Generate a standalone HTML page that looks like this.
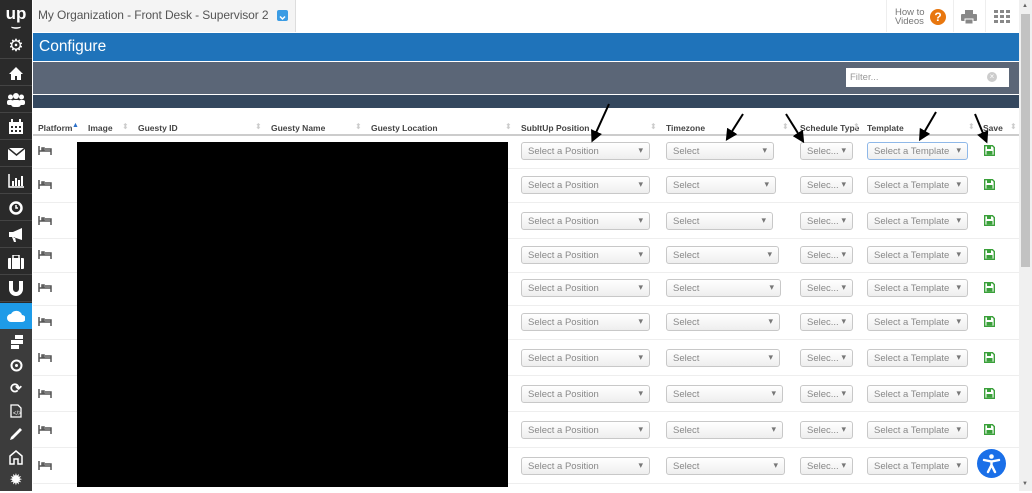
<!DOCTYPE html>
<html><head><meta charset="utf-8"><style>
*{margin:0;padding:0;box-sizing:border-box}
body{width:1032px;height:491px;overflow:hidden;background:#fff;font-family:"Liberation Sans",Arial,sans-serif;position:relative}
.a{position:absolute}
#side{left:0;top:0;width:32px;height:491px;background:#2a2a2a}
.ic{position:absolute;left:0;width:32px;height:26px;display:flex;align-items:center;justify-content:center;color:#fff;border-bottom:1px solid #444}
.sel{position:absolute;height:18px;border:1px solid #c8c8c8;border-radius:3px;background:linear-gradient(#fff,#eee);font-size:9.5px;color:#888;padding:3px 0 0 6px;white-space:nowrap;overflow:hidden}
.sel:after{content:"▾";position:absolute;right:6px;top:2px;font-size:9px;color:#777}
.th{position:absolute;top:123px;font-size:8.5px;font-weight:bold;color:#444;white-space:nowrap}
.sort{position:absolute;top:122px;font-size:8px;color:#ccc}
</style></head><body>
<div id="side" class="a">
 <div class="ic" style="top:0;height:33px;font-weight:bold;font-size:17px;flex-direction:column;line-height:14px;border:none">up<span style="font-size:10px;line-height:6px">‿</span></div>
 <div class="ic" style="top:33px;font-size:17px">⚙</div>
 <div class="ic" style="top:60px"><svg width="16" height="14"><path d="M1 8L8 1 15 8H13V14H9V10H7V14H3V8Z" fill="#fff"/></svg></div>
 <div class="ic" style="top:87px"><svg width="18" height="15"><circle cx="9" cy="4" r="3" fill="#fff"/><circle cx="3.5" cy="5" r="2.5" fill="#fff"/><circle cx="14.5" cy="5" r="2.5" fill="#fff"/><rect x="4" y="8" width="10" height="7" rx="3" fill="#fff"/><rect x="0" y="8" width="6" height="5" rx="2" fill="#fff"/><rect x="12" y="8" width="6" height="5" rx="2" fill="#fff"/></svg></div>
 <div class="ic" style="top:114px"><svg width="16" height="16"><rect x="1" y="3" width="14" height="12" fill="#fff"/><g fill="#2a2a2a"><rect x="3" y="7" width="2" height="2"/><rect x="7" y="7" width="2" height="2"/><rect x="11" y="7" width="2" height="2"/><rect x="3" y="11" width="2" height="2"/><rect x="7" y="11" width="2" height="2"/><rect x="11" y="11" width="2" height="2"/></g><rect x="3" y="0" width="2" height="4" fill="#fff"/><rect x="11" y="0" width="2" height="4" fill="#fff"/></svg></div>
 <div class="ic" style="top:141px"><svg width="17" height="12"><rect width="17" height="12" fill="#fff"/><path d="M0 0L8.5 7 17 0" stroke="#2a2a2a" fill="none" stroke-width="1.5"/></svg></div>
 <div class="ic" style="top:168px"><svg width="16" height="14"><path d="M1 0V13H16" stroke="#fff" fill="none" stroke-width="1.5"/><rect x="4" y="7" width="2" height="5" fill="#fff"/><rect x="7" y="4" width="2" height="8" fill="#fff"/><rect x="10" y="6" width="2" height="6" fill="#fff"/><rect x="13" y="2" width="2" height="10" fill="#fff"/></svg></div>
 <div class="ic" style="top:195px"><svg width="14" height="14"><circle cx="7" cy="7" r="5.5" stroke="#fff" stroke-width="2.5" fill="none"/><path d="M7 4V7H9" stroke="#fff" stroke-width="1.5" fill="none"/></svg></div>
 <div class="ic" style="top:222px"><svg width="16" height="14"><path d="M1 4H5L14 0V12L5 9H1Z M4 9L6 14H8L7 9" fill="#fff"/></svg></div>
 <div class="ic" style="top:249px"><svg width="16" height="14"><rect x="0" y="3" width="16" height="11" rx="1" fill="#fff"/><rect x="5" y="0" width="6" height="4" stroke="#fff" fill="none" stroke-width="1.5"/><rect x="3" y="3" width="1" height="11" fill="#2a2a2a"/><rect x="12" y="3" width="1" height="11" fill="#2a2a2a"/></svg></div>
 <div class="ic" style="top:276px"><svg width="14" height="15"><path d="M2 0V8A5 5 0 0 0 12 8V0" stroke="#fff" stroke-width="4" fill="none"/></svg></div>
 <div class="ic" style="top:303px;background:#1e9be8;border:none"><svg width="18" height="12"><path d="M4 12A4 4 0 0 1 4 4A6 6 0 0 1 15 5A3.5 3.5 0 0 1 15 12Z" fill="#fff"/></svg></div>
 <div class="a" style="left:0;top:329px;width:32px;height:162px;background:#3c3c3c"></div>
 <div class="ic" style="top:329px;border:none"><svg width="14" height="14"><g fill="#fff"><rect x="6" y="0" width="4" height="4"/><rect x="10" y="0" width="4" height="4"/><rect x="2" y="5" width="4" height="4"/><rect x="6" y="5" width="4" height="4"/><rect x="10" y="5" width="4" height="4"/><rect x="2" y="10" width="4" height="4"/><rect x="6" y="10" width="4" height="4"/></g></svg></div>
 <div class="ic" style="top:352px;border:none"><svg width="13" height="13"><circle cx="6.5" cy="6.5" r="5" stroke="#fff" stroke-width="2" fill="none"/><circle cx="6.5" cy="6.5" r="1.5" fill="#fff"/></svg></div>
 <div class="ic" style="top:375px;border:none;font-size:14px;font-weight:bold">⟳</div>
 <div class="ic" style="top:398px;border:none"><svg width="12" height="14"><path d="M1 1H8L11 4V13H1Z" stroke="#fff" fill="none" stroke-width="1.3"/><text x="3" y="11" font-size="6" fill="#fff">&lt;/&gt;</text></svg></div>
 <div class="ic" style="top:421px;border:none"><svg width="14" height="14"><path d="M1 13L2 10 9 3 11 5 4 12Z M9 3L11 1 13 3 11 5" fill="#fff"/></svg></div>
 <div class="ic" style="top:444px;border:none"><svg width="14" height="15"><path d="M1 14V6L7 1 13 6V14H9V9H5V14Z" stroke="#fff" fill="none" stroke-width="1.5"/></svg></div>
 <div class="ic" style="top:467px;border:none;font-size:16px">✹</div>
</div>
<!-- top bar -->
<div class="a" style="left:33px;top:0;width:263px;height:32px;background:#f4f4f4;border-right:1px solid #ddd"></div>
<div class="a" style="left:38px;top:8px;font-size:12px;color:#555;white-space:nowrap;letter-spacing:-0.1px">My Organization - Front Desk - Supervisor 2</div>
<div class="a" style="left:277px;top:10px;width:11px;height:11px;background:#3b9ce4;border-radius:2px"><svg width="11" height="11"><path d="M3 4.5L5.5 7 8 4.5" stroke="#fff" stroke-width="1.5" fill="none"/></svg></div>
<div class="a" style="left:886px;top:0;width:1px;height:32px;background:#eee"></div>
<div class="a" style="left:953px;top:0;width:1px;height:32px;background:#eee"></div>
<div class="a" style="left:985px;top:0;width:1px;height:32px;background:#eee"></div>
<div class="a" style="left:895px;top:8px;font-size:9.5px;color:#777;line-height:9px">How to<br>Videos</div>
<div class="a" style="left:930px;top:9px;width:16px;height:16px;border-radius:50%;background:#e8770f;color:#fff;font-weight:bold;font-size:12px;text-align:center;line-height:16px">?</div>
<svg class="a" style="left:961px;top:10px" width="16" height="14"><rect x="4" y="0" width="8" height="4" fill="#888"/><rect x="0" y="4" width="16" height="7" rx="1" fill="#888"/><rect x="4" y="9" width="8" height="5" fill="#888" stroke="#fff" stroke-width="1"/></svg>
<svg class="a" style="left:994px;top:10px" width="17" height="13"><g fill="#888"><rect x="0" y="0" width="4" height="3"/><rect x="6" y="0" width="4" height="3"/><rect x="12" y="0" width="4" height="3"/><rect x="0" y="5" width="4" height="3"/><rect x="6" y="5" width="4" height="3"/><rect x="12" y="5" width="4" height="3"/><rect x="0" y="10" width="4" height="3"/><rect x="6" y="10" width="4" height="3"/><rect x="12" y="10" width="4" height="3"/></g></svg>
<!-- scrollbar -->
<div class="a" style="left:1019px;top:0;width:13px;height:491px;background:#f0f0f0"></div>
<div class="a" style="left:1021px;top:14px;width:9px;height:253px;background:#c2c2c2"></div>
<div class="a" style="left:1022px;top:3px;font-size:6px;color:#666">▲</div>
<div class="a" style="left:1022px;top:481px;font-size:6px;color:#666">▼</div>
<!-- bars -->
<div class="a" style="left:33px;top:33px;width:986px;height:28px;background:#1f73ba;color:#fff;font-size:15.5px;padding:5px 0 0 6px">Configure</div>
<div class="a" style="left:33px;top:62px;width:986px;height:32px;background:#5b6677"></div>
<div class="a" style="left:846px;top:68px;width:163px;height:19px;background:#fff;font-size:9.5px;color:#999;padding:4px 0 0 4px">Filter...</div>
<div class="a" style="left:987px;top:72px;width:10px;height:10px;border-radius:50%;background:#ccc;color:#fff;font-size:8px;line-height:10px;text-align:center">×</div>
<div class="a" style="left:33px;top:95px;width:986px;height:13px;background:#34475e"></div>
<!-- header -->
<div class="th" style="left:38px">Platform</div><div class="a" style="left:72px;top:122px;font-size:7px;color:#2a6fc9">▲</div>
<div class="th" style="left:88px">Image</div><div class="sort" style="left:122px">⬍</div>
<div class="th" style="left:138px">Guesty ID</div><div class="sort" style="left:255px">⬍</div>
<div class="th" style="left:271px">Guesty Name</div><div class="sort" style="left:355px">⬍</div>
<div class="th" style="left:371px">Guesty Location</div><div class="sort" style="left:505px">⬍</div>
<div class="th" style="left:521px">SubItUp Position</div><div class="sort" style="left:650px">⬍</div>
<div class="th" style="left:666px">Timezone</div><div class="sort" style="left:782px">⬍</div>
<div class="th" style="left:800px">Schedule Type</div><div class="sort" style="left:853px">⬍</div>
<div class="th" style="left:867px">Template</div><div class="sort" style="left:968px">⬍</div>
<div class="th" style="left:983px">Save</div><div class="sort" style="left:1010px">⬍</div>
<div class="a" style="left:33px;top:134px;width:986px;height:2px;background:#ccc"></div>
<div id="rows"></div>
<div class="a" style="left:77px;top:142px;width:431px;height:345px;background:#000"></div>
<svg class="a" style="left:0;top:0" width="1032" height="491">
<defs><marker id="m" markerWidth="6" markerHeight="6" refX="3" refY="3" orient="auto"><path d="M0 0L6 3 0 6Z" fill="#000"/></marker></defs>
<g stroke="#000" stroke-width="2" marker-end="url(#m)">
<line x1="609" y1="104" x2="594" y2="137"/><line x1="743" y1="114" x2="729" y2="136"/><line x1="786" y1="114" x2="801" y2="138"/><line x1="936" y1="112" x2="922" y2="136"/><line x1="975" y1="114" x2="985" y2="138"/></g></svg>
<div class="a" style="left:977px;top:449px;width:29px;height:29px;border-radius:50%;background:#1a6fe8"><svg width="29" height="29"><circle cx="14.5" cy="7.5" r="2.3" fill="#fff"/><path d="M7 11L14.5 12.5 22 11 M14.5 12.5V16L11 23 M14.5 16L18 23" stroke="#fff" stroke-width="2.4" fill="none" stroke-linecap="round"/></svg></div>
<script>
var c=[151,185,221,255,288,322,358,394,430,466],te=[774,776,773,779,781,780,780,783,783,785],h="";
for(var i=0;i<10;i++){var y=c[i],t=y-9;
h+='<div class="a" style="left:33px;top:'+(y+17)+'px;width:986px;height:1px;background:#eee"></div>';
h+='<svg class="a" style="left:38px;top:'+(y-5)+'px" width="14" height="9"><path d="M1 0V9M1 5H13V9M4 2H6V4H4ZM7 3H13V5" stroke="#555" stroke-width="1.5" fill="none"/></svg>';
h+='<div class="sel" style="left:521px;top:'+t+'px;width:129px">Select a Position</div>';
h+='<div class="sel" style="left:666px;top:'+t+'px;width:'+(te[i]-666)+'px">Select</div>';
h+='<div class="sel" style="left:800px;top:'+t+'px;width:53px">Selec...</div>';
h+='<div class="sel" style="left:867px;top:'+t+'px;width:101px'+(i==0?';border-color:#8fb8e8':'')+'">Select a Template</div>';
h+='<svg class="a" style="left:984px;top:'+(y-6)+'px" width="11" height="11"><path d="M0.7 0.7H8.5L10.3 2.5V10.3H0.7Z" stroke="#3aa03a" stroke-width="1.4" fill="none"/><rect x="3" y="1" width="4" height="3" fill="#3aa03a"/><rect x="2.5" y="6" width="6" height="3.5" fill="#3aa03a"/></svg>';}
document.getElementById("rows").innerHTML=h;
</script>
</body></html>
